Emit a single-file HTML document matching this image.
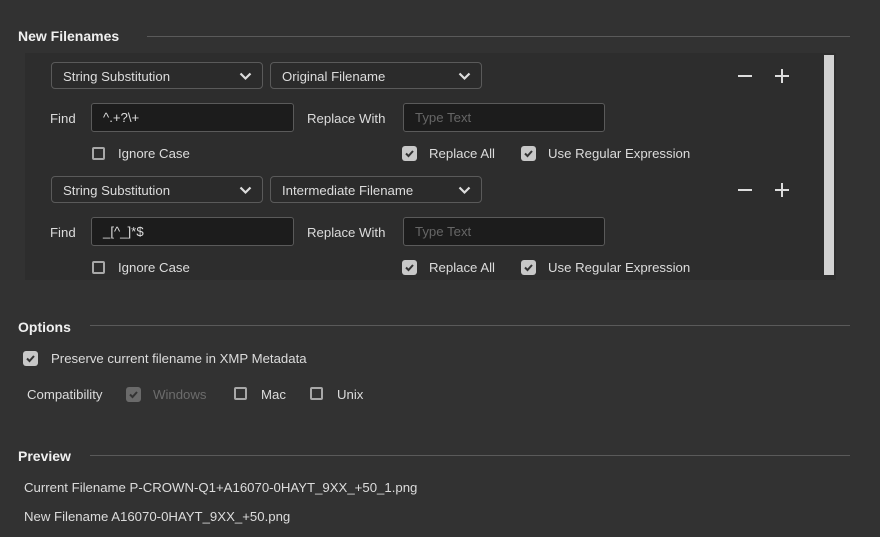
<!DOCTYPE html>
<html><head><style>
body{margin:0;width:880px;height:537px;background:#323232;font-family:"Liberation Sans",sans-serif;font-size:13.2px;color:#dcdcdc;position:relative;overflow:hidden}
.a{position:absolute;white-space:nowrap}
.h{font-weight:bold;font-size:14px;color:#f0f0f0}
.ln{position:absolute;height:1px;background:#5a5a5a}
.panel{position:absolute;left:25px;top:53px;width:811px;height:227px;background:#2d2d2d}
.dd{position:absolute;height:27px;border:1px solid #5a5a5a;border-radius:4px;background:#2b2b2b;box-sizing:border-box}
.dd span{position:absolute;left:11px;top:6px}
.dd svg{position:absolute;right:10px;top:9px}
.in{position:absolute;height:29px;border:1px solid #5a5a5a;border-radius:3px;background:#1c1c1c;box-sizing:border-box}
.in span{position:absolute;left:11px;top:6px}
.cb{position:absolute;width:13px;height:13px;border:2px solid #a8a8a8;border-radius:2px;box-sizing:border-box}
.cbc{position:absolute;width:15px;height:15px;background:#c8c8c8;border-radius:3px}
.cbc svg{position:absolute;left:2px;top:2px}
</style></head><body>
<div class="a h" style="left:18px;top:28px">New Filenames</div>
<div class="ln" style="left:147px;top:36px;width:703px"></div>
<div class="panel"></div>
<div class="a" style="left:824px;top:55px;width:10px;height:220px;background:#d2d2d2"></div>

<!-- row 1 -->
<div class="dd" style="left:51px;top:62px;width:212px"><span>String Substitution</span><svg width="13" height="9"><path d="M1.5 1.5l5 5 5-5" stroke="#ddd" stroke-width="2.2" fill="none"/></svg></div>
<div class="dd" style="left:270px;top:62px;width:212px"><span>Original Filename</span><svg width="13" height="9"><path d="M1.5 1.5l5 5 5-5" stroke="#ddd" stroke-width="2.2" fill="none"/></svg></div>
<div class="a" style="left:738px;top:75px;width:14px;height:2px;background:#ddd"></div>
<div class="a" style="left:775px;top:75px;width:14px;height:2px;background:#ddd"></div>
<div class="a" style="left:781px;top:69px;width:2px;height:14px;background:#ddd"></div>
<div class="a" style="left:50px;top:111px">Find</div>
<div class="in" style="left:91px;top:103px;width:203px"><span>^.+?\+</span></div>
<div class="a" style="left:307px;top:111px">Replace With</div>
<div class="in" style="left:403px;top:103px;width:202px"><span style="color:#666">Type Text</span></div>
<div class="cb" style="left:92px;top:147px"></div><div class="a" style="left:118px;top:146px">Ignore Case</div>
<div class="cbc" style="left:402px;top:146px"><svg width="11" height="11"><path d="M2 5.5l2.5 2.5 4.5-5" stroke="#333" stroke-width="2" fill="none"/></svg></div><div class="a" style="left:429px;top:146px">Replace All</div>
<div class="cbc" style="left:521px;top:146px"><svg width="11" height="11"><path d="M2 5.5l2.5 2.5 4.5-5" stroke="#333" stroke-width="2" fill="none"/></svg></div><div class="a" style="left:548px;top:146px">Use Regular Expression</div>

<!-- row 2 -->
<div class="dd" style="left:51px;top:176px;width:212px"><span>String Substitution</span><svg width="13" height="9"><path d="M1.5 1.5l5 5 5-5" stroke="#ddd" stroke-width="2.2" fill="none"/></svg></div>
<div class="dd" style="left:270px;top:176px;width:212px"><span>Intermediate Filename</span><svg width="13" height="9"><path d="M1.5 1.5l5 5 5-5" stroke="#ddd" stroke-width="2.2" fill="none"/></svg></div>
<div class="a" style="left:738px;top:189px;width:14px;height:2px;background:#ddd"></div>
<div class="a" style="left:775px;top:189px;width:14px;height:2px;background:#ddd"></div>
<div class="a" style="left:781px;top:183px;width:2px;height:14px;background:#ddd"></div>
<div class="a" style="left:50px;top:225px">Find</div>
<div class="in" style="left:91px;top:217px;width:203px"><span>_[^_]*$</span></div>
<div class="a" style="left:307px;top:225px">Replace With</div>
<div class="in" style="left:403px;top:217px;width:202px"><span style="color:#666">Type Text</span></div>
<div class="cb" style="left:92px;top:261px"></div><div class="a" style="left:118px;top:260px">Ignore Case</div>
<div class="cbc" style="left:402px;top:260px"><svg width="11" height="11"><path d="M2 5.5l2.5 2.5 4.5-5" stroke="#333" stroke-width="2" fill="none"/></svg></div><div class="a" style="left:429px;top:260px">Replace All</div>
<div class="cbc" style="left:521px;top:260px"><svg width="11" height="11"><path d="M2 5.5l2.5 2.5 4.5-5" stroke="#333" stroke-width="2" fill="none"/></svg></div><div class="a" style="left:548px;top:260px">Use Regular Expression</div>

<!-- options -->
<div class="a h" style="left:18px;top:319px">Options</div>
<div class="ln" style="left:90px;top:325px;width:760px"></div>
<div class="cbc" style="left:23px;top:351px"><svg width="11" height="11"><path d="M2 5.5l2.5 2.5 4.5-5" stroke="#333" stroke-width="2" fill="none"/></svg></div>
<div class="a" style="left:51px;top:351px">Preserve current filename in XMP Metadata</div>
<div class="a" style="left:27px;top:387px">Compatibility</div>
<div class="cbc" style="left:126px;top:387px;background:#6a6a6a"><svg width="11" height="11"><path d="M2 5.5l2.5 2.5 4.5-5" stroke="#333" stroke-width="2" fill="none"/></svg></div>
<div class="a" style="left:153px;top:387px;color:#6c6c6c">Windows</div>
<div class="cb" style="left:234px;top:387px"></div><div class="a" style="left:261px;top:387px">Mac</div>
<div class="cb" style="left:310px;top:387px"></div><div class="a" style="left:337px;top:387px">Unix</div>

<!-- preview -->
<div class="a h" style="left:18px;top:448px">Preview</div>
<div class="ln" style="left:90px;top:455px;width:760px"></div>
<div class="a" style="left:24px;top:480px">Current Filename P-CROWN-Q1+A16070-0HAYT_9XX_+50_1.png</div>
<div class="a" style="left:24px;top:509px">New Filename A16070-0HAYT_9XX_+50.png</div>
</body></html>
